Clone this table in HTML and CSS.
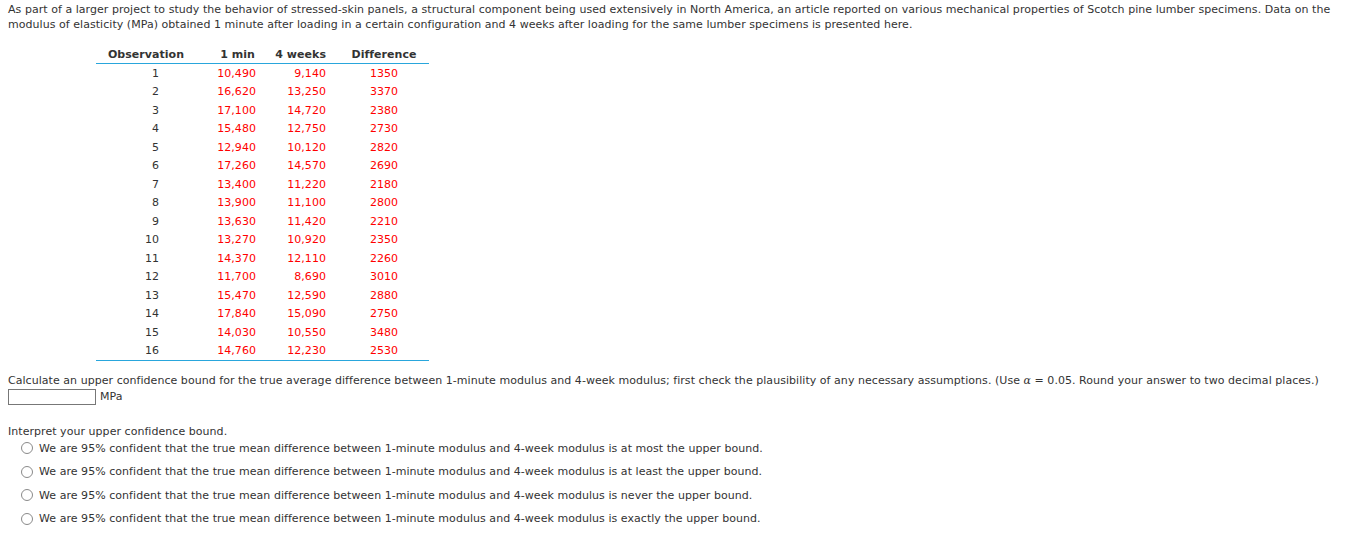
FILE: index.html
```html
<!DOCTYPE html>
<html>
<head>
<meta charset="utf-8">
<link rel="stylesheet" href="styles.css">
</head>
<body>
<p class="intro">As part of a larger project to study the behavior of stressed-skin panels, a structural component being used extensively in North America, an article reported on various mechanical properties of Scotch pine lumber specimens. Data on the modulus of elasticity (MPa) obtained 1 minute after loading in a certain configuration and 4 weeks after loading for the same lumber specimens is presented here.</p>
<table class="data">
<colgroup><col class="c1"><col class="c2"><col class="c3"><col class="c4"></colgroup>
<thead>
<tr><th class="obs-h">Observation</th><th class="num">1 min</th><th class="num">4 weeks</th><th class="diff">Difference</th></tr>
</thead>
<tbody>
<tr><td class="obs">1</td><td class="num red">10,490</td><td class="num red">9,140</td><td class="diff red">1350</td></tr>
<tr><td class="obs">2</td><td class="num red">16,620</td><td class="num red">13,250</td><td class="diff red">3370</td></tr>
<tr><td class="obs">3</td><td class="num red">17,100</td><td class="num red">14,720</td><td class="diff red">2380</td></tr>
<tr><td class="obs">4</td><td class="num red">15,480</td><td class="num red">12,750</td><td class="diff red">2730</td></tr>
<tr><td class="obs">5</td><td class="num red">12,940</td><td class="num red">10,120</td><td class="diff red">2820</td></tr>
<tr><td class="obs">6</td><td class="num red">17,260</td><td class="num red">14,570</td><td class="diff red">2690</td></tr>
<tr><td class="obs">7</td><td class="num red">13,400</td><td class="num red">11,220</td><td class="diff red">2180</td></tr>
<tr><td class="obs">8</td><td class="num red">13,900</td><td class="num red">11,100</td><td class="diff red">2800</td></tr>
<tr><td class="obs">9</td><td class="num red">13,630</td><td class="num red">11,420</td><td class="diff red">2210</td></tr>
<tr><td class="obs">10</td><td class="num red">13,270</td><td class="num red">10,920</td><td class="diff red">2350</td></tr>
<tr><td class="obs">11</td><td class="num red">14,370</td><td class="num red">12,110</td><td class="diff red">2260</td></tr>
<tr><td class="obs">12</td><td class="num red">11,700</td><td class="num red">8,690</td><td class="diff red">3010</td></tr>
<tr><td class="obs">13</td><td class="num red">15,470</td><td class="num red">12,590</td><td class="diff red">2880</td></tr>
<tr><td class="obs">14</td><td class="num red">17,840</td><td class="num red">15,090</td><td class="diff red">2750</td></tr>
<tr><td class="obs">15</td><td class="num red">14,030</td><td class="num red">10,550</td><td class="diff red">3480</td></tr>
<tr class="last"><td class="obs">16</td><td class="num red">14,760</td><td class="num red">12,230</td><td class="diff red">2530</td></tr>
</tbody>
</table>
<p class="question">Calculate an upper confidence bound for the true average difference between 1-minute modulus and 4-week modulus; first check the plausibility of any necessary assumptions. (Use <i class="alpha">α</i> = 0.05. Round your answer to two decimal places.)</p>
<div class="answer"><span class="box"></span><span class="unit">MPa</span></div>
<p class="interp">Interpret your upper confidence bound.</p>
<div class="options">
<div class="opt"><span class="radio"></span><span>We are 95% confident that the true mean difference between 1-minute modulus and 4-week modulus is at most the upper bound.</span></div>
<div class="opt"><span class="radio"></span><span>We are 95% confident that the true mean difference between 1-minute modulus and 4-week modulus is at least the upper bound.</span></div>
<div class="opt"><span class="radio"></span><span>We are 95% confident that the true mean difference between 1-minute modulus and 4-week modulus is never the upper bound.</span></div>
<div class="opt"><span class="radio"></span><span>We are 95% confident that the true mean difference between 1-minute modulus and 4-week modulus is exactly the upper bound.</span></div>
</div>
</body>
</html>
```

FILE: styles.css
```css
html, body {
  margin: 0;
  padding: 0;
  background: #fff;
}
body {
  padding: 1px 8px 0 8px;
  font-family: "DejaVu Sans", Verdana, sans-serif;
  font-size: 11px;
  line-height: 15px;
  letter-spacing: 0.045px;
  color: #333;
}
.intro {
  margin: 0;
  padding-top: 0.5px;
}
.data {
  margin: 14px 0 0 88px;
  border-collapse: collapse;
  table-layout: fixed;
  width: 333px;
}
.c1 { width: 100px; }
.c2 { width: 66px; }
.c3 { width: 77px; }
.c4 { width: 90px; }
.data th {
  font-weight: bold;
  height: 17px;
  line-height: 17px;
  padding: 0;
  border-bottom: 1px solid #29a6dc;
}
.data td {
  line-height: 16.5px;
  padding: 2px 0 0 0;
}
.data tr.last td {
  border-bottom: 1px solid #29a6dc;
}
.obs-h { text-align: center; }
.data td.obs { text-align: right; padding-right: 37px; }
.data td.num { text-align: right; padding-right: 6px; }
.data th.num { text-align: right; padding-right: 7px; }
.data td.num:nth-child(3), .data th.num:nth-child(3) { padding-right: 13px; }
.diff { text-align: center; }
.red { color: #ff0000; }
.question {
  margin: 12px 0 0 0;
}
.alpha {
  font-family: "DejaVu Serif", serif;
}
.answer {
  display: flex;
  align-items: center;
  gap: 4px;
  margin-top: 1px;
}
.box {
  display: block;
  width: 86px;
  height: 14px;
  border: 1px solid #777;
}
.unit {
  line-height: 15px;
}
.interp {
  margin: 19px 0 0 0;
}
.options {
  display: flex;
  flex-direction: column;
  gap: 8.6px;
  margin-top: 2px;
}
.opt {
  display: flex;
  align-items: center;
  height: 15px;
  padding-left: 13px;
}
.radio {
  display: block;
  width: 10px;
  height: 10px;
  border: 1px solid #8a8a8a;
  border-radius: 50%;
  margin-right: 6px;
  flex: none;
}
```
